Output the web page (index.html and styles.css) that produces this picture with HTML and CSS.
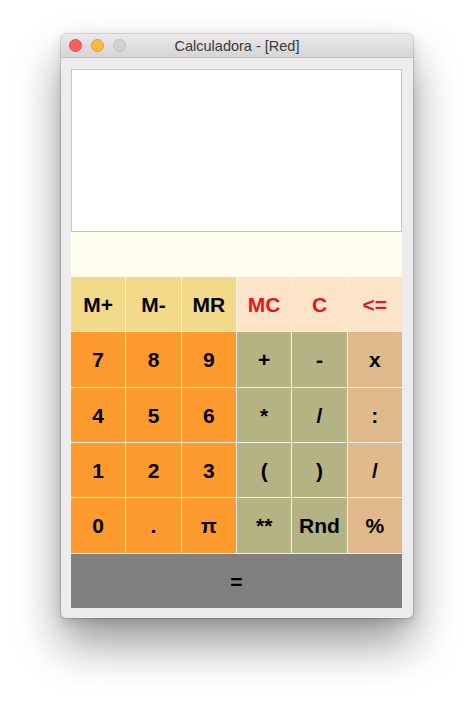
FILE: index.html
```html
<!DOCTYPE html>
<html>
<head>
<meta charset="utf-8">
<link rel="stylesheet" href="styles.css">
</head>
<body>
<div class="window">
  <div class="titlebar">
    <div class="lights">
      <span class="light red"></span>
      <span class="light yellow"></span>
      <span class="light gray"></span>
    </div>
    <div class="title">Calculadora - [Red]</div>
  </div>
  <div class="content">
    <div class="display"></div>
    <div class="memory"></div>
    <div class="keys">
      <div class="key mem">M+</div>
      <div class="key mem">M-</div>
      <div class="key mem">MR</div>
      <div class="key clr">MC</div>
      <div class="key clr">C</div>
      <div class="key clr">&lt;=</div>

      <div class="key num">7</div>
      <div class="key num">8</div>
      <div class="key num">9</div>
      <div class="key op">+</div>
      <div class="key op">-</div>
      <div class="key op2">x</div>

      <div class="key num">4</div>
      <div class="key num">5</div>
      <div class="key num">6</div>
      <div class="key op">*</div>
      <div class="key op">/</div>
      <div class="key op2">:</div>

      <div class="key num">1</div>
      <div class="key num">2</div>
      <div class="key num">3</div>
      <div class="key op">(</div>
      <div class="key op">)</div>
      <div class="key op2">/</div>

      <div class="key num">0</div>
      <div class="key num">.</div>
      <div class="key num">π</div>
      <div class="key op">**</div>
      <div class="key op">Rnd</div>
      <div class="key op2">%</div>

      <div class="key eq">=</div>
    </div>
  </div>
</div>
</body>
</html>
```

FILE: styles.css
```css
html, body {
  margin: 0;
  padding: 0;
  background: #ffffff;
}
body {
  width: 474px;
  height: 706px;
  overflow: hidden;
  font-family: "Liberation Sans", Arial, sans-serif;
}
.window {
  margin: 34px 0 0 61px;
  width: 352px;
  height: 584px;
  background: #ececec;
  border-radius: 5px;
  box-shadow: 0 0 0 1px rgba(0,0,0,0.12), 0 26px 46px rgba(0,0,0,0.4), 0 4px 12px rgba(0,0,0,0.14);
  overflow: hidden;
  display: flex;
  flex-direction: column;
}
.titlebar {
  height: 23px;
  background: linear-gradient(#ebe9eb, #d6d4d6);
  border-bottom: 1px solid #c2c0c2;
  display: flex;
  align-items: center;
  position: relative;
}
.lights {
  display: flex;
  gap: 9px;
  padding-left: 8px;
}
.light {
  width: 13px;
  height: 13px;
  border-radius: 50%;
  box-sizing: border-box;
}
.light.red { background: #fc605c; border: 1px solid #de4a44; }
.light.yellow { background: #fdbc40; border: 1px solid #de9e2c; }
.light.gray { background: #d2d0d2; border: 1px solid #c0bec0; }
.title {
  position: absolute;
  left: 0;
  right: 0;
  top: 0;
  bottom: 0;
  display: flex;
  align-items: center;
  justify-content: center;
  font-size: 14.5px;
  color: #3a3a3a;
  font-family: "Liberation Sans", Arial, sans-serif;
}
.content {
  padding: 11px 11px 10px 10px;
  display: flex;
  flex-direction: column;
}
.display {
  height: 161px;
  background: #ffffff;
  border: 1px solid #c6c6c6;
}
.memory {
  height: 45px;
  background: #fffdee;
}
.keys {
  display: grid;
  grid-template-columns: repeat(6, 1fr);
  grid-template-rows: repeat(6, 1fr);
  height: 331px;
  gap: 1px;
  background: #f4efe4;
}
.key {
  display: flex;
  align-items: center;
  justify-content: center;
  font-weight: bold;
  font-size: 21px;
  color: #000000;
  padding-top: 2px;
}
.mem { background: #f2da8a; }
.clr { background: #fde4c8; color: #e8141c; }
.num { background: #fd9a2e; }
.op { background: #b3b384; }
.op2 { background: #dfb88c; }
.eq {
  grid-column: 1 / -1;
  background: #808080;
}
```
